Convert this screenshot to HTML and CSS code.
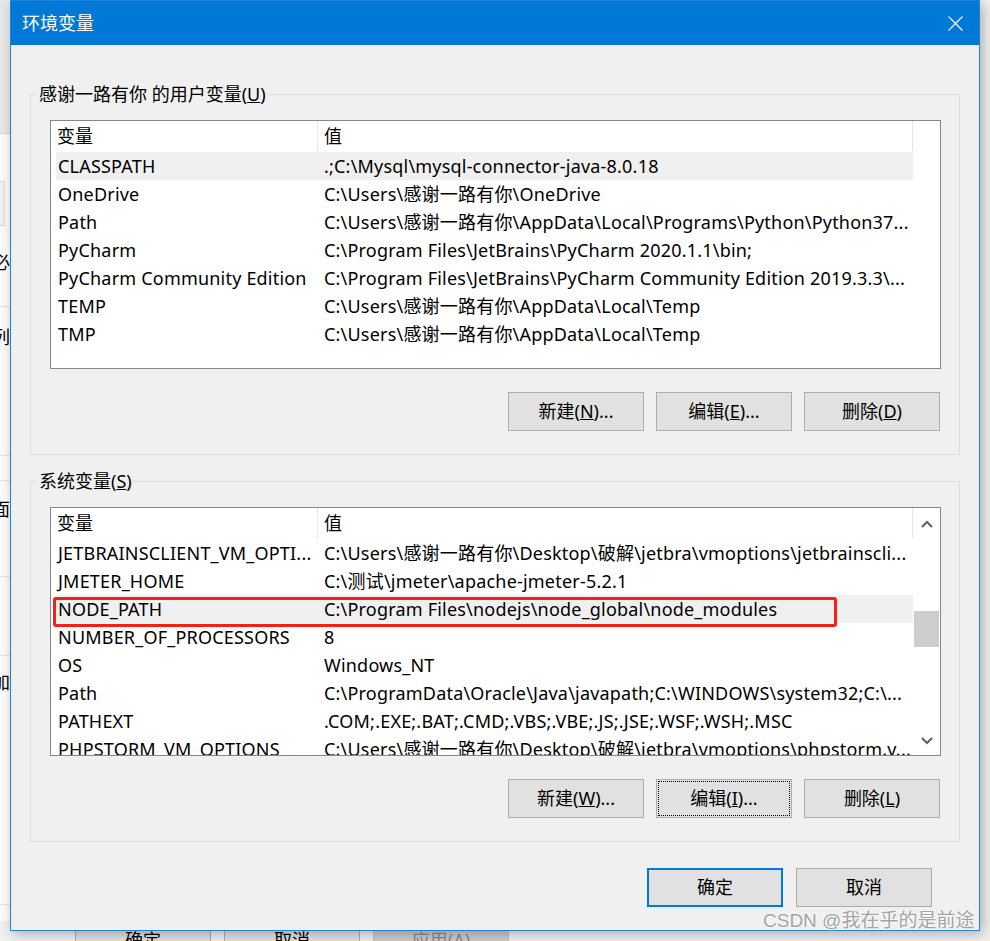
FILE: index.html
```html
<!DOCTYPE html>
<html lang="zh-CN">
<head>
<meta charset="utf-8">
<title>环境变量</title>
<link rel="stylesheet" href="styles.css">
</head>
<body>
<div class="bgwin">
  <div class="bg-main">
    <div class="bg-side">
      <div class="bg-head"></div>
      <div class="bg-gap"></div>
      <div class="bg-tab"></div>
      <div class="bg-cell h81 p24"><span>必</span></div>
      <div class="bg-cell h148 p18"><span>列</span></div>
      <div class="bg-cell h24"></div>
      <div class="bg-cell h95 p16"><span>面</span></div>
      <div class="bg-cell h78"></div>
      <div class="bg-cell h248 p14"><span>加</span></div>
    </div>
  </div>
  <div class="bg-footer">
    <div class="bg-btn">确定</div>
    <div class="bg-btn">取消</div>
    <div class="bg-btn disabled">应用(A)</div>
  </div>
</div>

<div class="dialog">
  <div class="titlebar">
    <span class="title">环境变量</span>
    <svg class="close" width="15" height="15" viewBox="0 0 15 15"><path d="M0.5 0.5L14.5 14.5M14.5 0.5L0.5 14.5" stroke="#fff" stroke-width="1.2" fill="none"/></svg>
  </div>
  <div class="dlg-body">
    <section class="group">
      <div class="legend">感谢一路有你 的用户变量(<u>U</u>)</div>
      <div class="list">
        <div class="list-main">
          <div class="list-header"><div class="hcol c-name">变量</div><div class="hcol c-val">值</div></div>
          <div class="rows">
            <div class="row selected"><span class="cell name">CLASSPATH</span><span class="cell val">.;C:\Mysql\mysql-connector-java-8.0.18</span></div>
            <div class="row"><span class="cell name">OneDrive</span><span class="cell val">C:\Users\感谢一路有你\OneDrive</span></div>
            <div class="row"><span class="cell name">Path</span><span class="cell val">C:\Users\感谢一路有你\AppData\Local\Programs\Python\Python37...</span></div>
            <div class="row"><span class="cell name">PyCharm</span><span class="cell val">C:\Program Files\JetBrains\PyCharm 2020.1.1\bin;</span></div>
            <div class="row"><span class="cell name">PyCharm Community Edition</span><span class="cell val">C:\Program Files\JetBrains\PyCharm Community Edition 2019.3.3\...</span></div>
            <div class="row"><span class="cell name">TEMP</span><span class="cell val">C:\Users\感谢一路有你\AppData\Local\Temp</span></div>
            <div class="row"><span class="cell name">TMP</span><span class="cell val">C:\Users\感谢一路有你\AppData\Local\Temp</span></div>
          </div>
        </div>
        <div class="list-side"></div>
      </div>
      <div class="btn-row">
        <button class="btn">新建(<u>N</u>)...</button>
        <button class="btn">编辑(<u>E</u>)...</button>
        <button class="btn">删除(<u>D</u>)</button>
      </div>
    </section>

    <section class="group second">
      <div class="legend">系统变量(<u>S</u>)</div>
      <div class="list">
        <div class="list-main">
          <div class="list-header"><div class="hcol c-name">变量</div><div class="hcol c-val">值</div></div>
          <div class="rows">
            <div class="row"><span class="cell name">JETBRAINSCLIENT_VM_OPTI...</span><span class="cell val">C:\Users\感谢一路有你\Desktop\破解\jetbra\vmoptions\jetbrainscli...</span></div>
            <div class="row"><span class="cell name">JMETER_HOME</span><span class="cell val">C:\测试\jmeter\apache-jmeter-5.2.1</span></div>
            <div class="row selected marked"><span class="cell name">NODE_PATH</span><span class="cell val">C:\Program Files\nodejs\node_global\node_modules</span><span class="mark"></span></div>
            <div class="row"><span class="cell name">NUMBER_OF_PROCESSORS</span><span class="cell val">8</span></div>
            <div class="row"><span class="cell name">OS</span><span class="cell val">Windows_NT</span></div>
            <div class="row"><span class="cell name">Path</span><span class="cell val">C:\ProgramData\Oracle\Java\javapath;C:\WINDOWS\system32;C:\...</span></div>
            <div class="row"><span class="cell name">PATHEXT</span><span class="cell val">.COM;.EXE;.BAT;.CMD;.VBS;.VBE;.JS;.JSE;.WSF;.WSH;.MSC</span></div>
            <div class="row"><span class="cell name">PHPSTORM_VM_OPTIONS</span><span class="cell val">C:\Users\感谢一路有你\Desktop\破解\jetbra\vmoptions\phpstorm.v...</span></div>
          </div>
        </div>
        <div class="list-side scrollbar">
          <div class="sb-btn up"><svg width="12" height="8" viewBox="0 0 12 8"><path d="M1 7L6 2L11 7" stroke="#606060" stroke-width="2" fill="none"/></svg></div>
          <div class="sb-track"><div class="sb-thumb"></div></div>
          <div class="sb-btn down"><svg width="12" height="8" viewBox="0 0 12 8"><path d="M1 1L6 6L11 1" stroke="#606060" stroke-width="2" fill="none"/></svg></div>
        </div>
      </div>
      <div class="btn-row">
        <button class="btn">新建(<u>W</u>)...</button>
        <button class="btn focused">编辑(<u>I</u>)...</button>
        <button class="btn">删除(<u>L</u>)</button>
      </div>
    </section>

    <div class="dlg-actions">
      <button class="btn default">确定</button>
      <button class="btn">取消</button>
    </div>
  </div>
</div>

<div class="watermark">CSDN @我在乎的是前途</div>
</body>
</html>
```

FILE: styles.css
```css
* { box-sizing: border-box; }
html, body { margin: 0; padding: 0; }
body {
  width: 990px;
  height: 941px;
  overflow: hidden;
  position: relative;
  background: #f0f0f0;
  font-family: "Noto Sans", "Noto Sans CJK SC", sans-serif;
  font-size: 18px;
  color: #000;
}

/* background window */
.bgwin { width: 990px; height: 941px; display: flex; flex-direction: column; }
.bg-main { height: 921px; flex: none; }
.bg-side { width: 10px; display: flex; flex-direction: column; background: #fbfbfb; height: 921px; }
.bg-head { height: 134px; background: #e8e8e8; border-bottom: 1px solid #d4d4d4; flex: none; }
.bg-gap { height: 47px; flex: none; }
.bg-tab { height: 45px; background: #f0f0f0; border-top: 1px solid #dadada; border-bottom: 1px solid #dadada; border-right: 1px solid #dadada; width: 5px; flex: none; }
.bg-cell { flex: none; border-bottom: 1px solid #e2e2e2; display: flex; justify-content: flex-end; overflow: hidden; line-height: 24px; font-size: 18px; align-items: flex-start; }
.bg-cell span { flex: none; }
.h81 { height: 81px; } .h148 { height: 149px; } .h24 { height: 25px; } .h95 { height: 96px; } .h78 { height: 79px; } .h248 { height: 249px; }
.p24 { padding-top: 24px; } .p18 { padding-top: 18px; } .p16 { padding-top: 16px; } .p14 { padding-top: 14px; }
.bg-footer { height: 40px; flex: none; display: flex; gap: 13px; padding-left: 75px; }
.bg-btn { width: 136px; height: 39px; border: 1px solid #adadad; background: #e1e1e1; text-align: center; line-height: 37px; }
.bg-btn.disabled { background: #cccccc; border-color: #bfbfbf; color: #8a8a8a; }

/* dialog window */
.dialog {
  position: absolute;
  left: 10px;
  top: 0;
  width: 970px;
  height: 931px;
  background: #f0f0f0;
  border: 1px solid #1f83d8;
  box-shadow: 3px 3px 12px rgba(0, 0, 0, 0.28);
}
.titlebar {
  height: 44px;
  background: #0078d7;
  display: flex;
  align-items: center;
  justify-content: space-between;
  padding-left: 11px;
  padding-right: 16px;
}
.title { color: #fff; font-size: 18px; line-height: 44px; }
.close { display: block; margin-top: 1px; }

.dlg-body { padding: 49px 19px 0 19px; }
.group { border: 1px solid #dcdcdc; padding: 0 18px 23px 19px; }
.group.second { margin-top: 26px; }
.legend {
  margin-top: -13px;
  margin-left: -13px;
  padding: 0 2px;
  width: fit-content;
  line-height: 24px;
  background: #f0f0f0;
}

.list {
  margin-top: 14px;
  height: 249px;
  border: 1px solid #828790;
  background: #fff;
  display: flex;
}
.list-main { width: 862px; flex: none; overflow: hidden; }
.list-side { width: 27px; flex: none; }
.list-header { display: flex; height: 31px; }
.hcol { line-height: 31px; padding-left: 6px; border-right: 1px solid #e5e5e5; height: 30px; }
.c-name { width: 267px; }
.c-val { width: 595px; }
.rows { padding-left: 5px; }
.row { display: grid; grid-template-columns: 268px 1fr; height: 28px; line-height: 28px; position: relative; letter-spacing: 0.2px; }
.row.selected { background: #f0f0f0; }
.cell { white-space: nowrap; overflow: hidden; }
.cell.name { padding-left: 2px; }
.cell.val { padding-right: 2px; }
.mark {
  position: absolute;
  left: -3px;
  top: 2px;
  width: 784px;
  height: 30px;
  border: 3px solid #f3201b;
  border-radius: 3px;
}

.scrollbar { display: flex; flex-direction: column; background: #fff; }
.sb-btn { display: flex; align-items: center; justify-content: center; flex: none; }
.sb-btn.up { height: 32px; }
.sb-btn.down { height: 28px; }
.sb-btn svg { display: block; }
.sb-track { flex: 1; }
.sb-thumb { margin: 71px 1px 0 1px; height: 36px; background: #cdcdcd; }

.btn-row { display: flex; justify-content: flex-end; gap: 12px; margin-top: 23px; margin-right: 1px; }
.btn {
  width: 136px;
  height: 39px;
  margin: 0;
  padding: 0;
  font: inherit;
  color: #000;
  background: #e1e1e1;
  border: 1px solid #adadad;
  text-align: center;
  line-height: 37px;
}
.btn.focused { outline: 1px dotted #000; outline-offset: -3px; }
.btn.default { border: 2px solid #0078d7; line-height: 35px; }
.dlg-actions { display: flex; justify-content: flex-end; gap: 13px; margin-top: 26px; padding-right: 28px; }

.watermark {
  position: absolute;
  left: 763px;
  top: 908px;
  font-family: "Liberation Sans", "Noto Sans CJK SC", sans-serif;
  font-size: 19px;
  line-height: 26px;
  color: #a3a3a3;
  text-shadow: 0 0 2px #fff, 0 0 2px #fff;
  white-space: nowrap;
}
```
